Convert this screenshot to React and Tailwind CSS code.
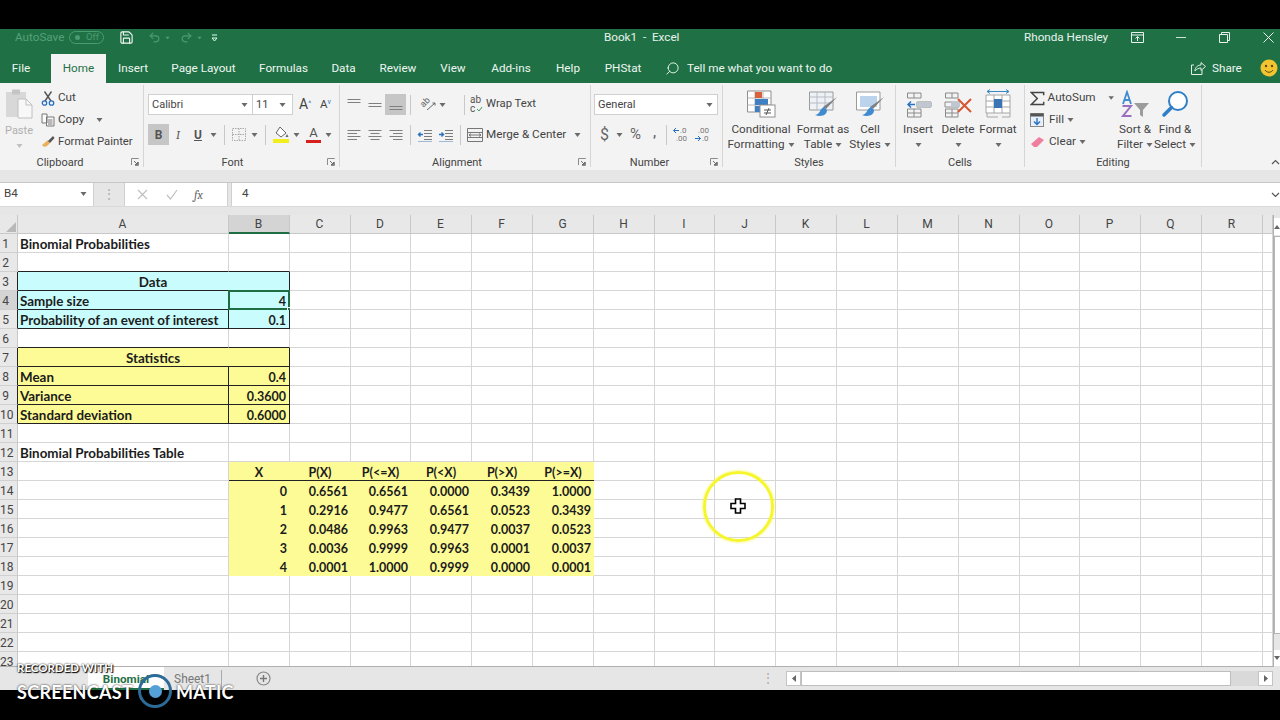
import React from "react";
import { Search, Save, Undo2, Redo2 } from "lucide-react";

const Caret = ({ c = "#6a6a6a", className = "" }) => (
  <svg width="7" height="4" viewBox="0 0 7 4" className={className}><path d="M0.5 0H6.5L3.5 4Z" fill={c} /></svg>
);
const Launcher = () => (
  <svg width="8" height="8" viewBox="0 0 8 8" className="absolute right-[4px] bottom-[4px]">
    <path d="M0.5 7V0.5H7.5V1M7.5 4V7.5H4" fill="none" stroke="#8c8c8c" /><path d="M3 3L6.5 6.5M6.5 4V6.5H4" fill="none" stroke="#6f6f6f" />
  </svg>
);
const Group = ({ w, label, children, lx, lp = "" }) => (
  <div className={`relative flex flex-col h-full shrink-0 ${w}`}>
    <div className="flex-1 min-h-0 flex">{children}</div>
    <div className={`h-[16px] pt-[1px] text-center text-[11px] leading-[15px] text-[#444] ${lp}`}>{label}</div>
    {lx && <Launcher />}
  </div>
);
const Sep = () => <div className="w-px h-[82px] mt-[2px] bg-[#d5d5d5] shrink-0" />;
const VSep = ({ ml = "ml-0", mr = "mr-0" }) => <div className={`w-px h-[20px] bg-[#c8c8c8] shrink-0 ${ml} ${mr}`} />;
const Lines = ({ rows }) => (
  <svg width="16" height="14" viewBox="0 0 16 14">
    {rows.map((r, i) => <path key={i} d={`M${r[0]} ${r[2]}H${r[1]}`} stroke="#7f7f7f" strokeWidth="1" />)}
  </svg>
);
const AlignT = ({ y }) => <Lines rows={[[1.5, 14.5, y], [1.5, 14.5, y + 3]]} />;
const AlignH = ({ k }) => {
  const short = k === "l" ? [1.5, 11] : k === "c" ? [3.5, 12.5] : [5, 14.5];
  return <Lines rows={[[1.5, 14.5, 2.5], short.concat(5.5), [1.5, 14.5, 8.5], short.concat(11.5)]} />;
};
const Indent = ({ flip }) => (
  <svg width="16" height="14" viewBox="0 0 16 14">
    <path d="M7 2.5H15M7 5.5H15M7 8.5H15M7 11.5H15" stroke="#7a7a7a" />
    <path d="M1 13.5H15" stroke="#9fb8d4" />
    <path d={flip ? "M1 6.5H5M3.5 4.5L5.5 6.5L3.5 8.5" : "M1.5 6.5H6M3.5 4.5L1.5 6.5L3.5 8.5"} stroke="#2a71c0" strokeWidth="1.4" fill="none" />
  </svg>
);
const Big = ({ w, l1, l2, caret, children }) => (
  <div className={`flex flex-col items-center shrink-0 ${w}`}>
    <div className="h-[39px] flex items-center justify-center pt-[3px]">{children}</div>
    <div className="text-[11.7px] leading-[15px] text-[#444] whitespace-nowrap h-[15px]">{l1}</div>
    <div className="text-[11.7px] leading-[15px] text-[#444] whitespace-nowrap h-[15px] flex items-center gap-[3px]">{l2}{caret && <Caret />}</div>
  </div>
);
const CondIcon = () => (
  <svg width="30" height="28" viewBox="0 0 30 28">
    <path d="M1.5 1H25V22H1.5Z" fill="#fff" stroke="#8f8f8f" />
    <path d="M1.5 8H25M1.5 15H25M9 1V22M17 1V22" stroke="#b5b5b5" />
    <rect x="9" y="2" width="7" height="6" fill="#d9633c" /><rect x="9" y="9" width="13" height="6" fill="#3f7fc4" /><rect x="9" y="16" width="5" height="6" fill="#3f7fc4" />
    <rect x="14" y="15" width="15" height="12" fill="#fff" stroke="#8f8f8f" />
    <path d="M18 20H25M18 23H25M23 18L20 25" stroke="#555" />
  </svg>
);
const TableIcon = ({ cell }) => (
  <svg width="30" height="28" viewBox="0 0 30 28">
    <path d="M1.5 2H25V20H1.5Z" fill={cell ? "#fff" : "#eef2f7"} stroke="#9a9a9a" />
    {!cell && <path d="M1.5 7H25M1.5 13H25M9 2V20M17 2V20" stroke="#b7bcc4" />}
    {cell && <rect x="5" y="6" width="17" height="11" fill="#bcd3ee" />}
    <path d="M29 7L18 19L15 17Z" fill="#7f7f7f" />
    <path d="M16 17C11 19 13 24 7 25C12 27 19 26 19 20Z" fill="#3f8ad0" />
  </svg>
);
const InsertIcon = () => (
  <svg width="27" height="28" viewBox="0 0 27 28">
    <path d="M2.5 3H16V8H2.5ZM9 3V8M2.5 19H16V27H2.5ZM9 19V27M2.5 23H16M12 12H26V17H12ZM19 12V17" fill="none" stroke="#8a8a8a" />
    <rect x="12" y="12" width="14" height="5" fill="#bfc7d2" />
    <path d="M10 14.5H3M6 11.5L3 14.5L6 17.5" fill="none" stroke="#2a71c0" strokeWidth="1.5" />
  </svg>
);
const DeleteIcon = () => (
  <svg width="30" height="28" viewBox="0 0 30 28">
    <path d="M2.5 3H15V8H2.5ZM9 3V8M2.5 19H15V27H2.5ZM9 19V27M2.5 23H15M2 12H16V17H2ZM9 12V17" fill="none" stroke="#8a8a8a" />
    <rect x="8" y="11" width="9" height="6" fill="#bfc7d2" />
    <path d="M15 9L28 22M28 9L15 22" stroke="#d65532" strokeWidth="2" />
  </svg>
);
const FormatIcon = () => (
  <svg width="28" height="30" viewBox="0 0 28 30">
    <path d="M2 6H26V24H2ZM10 6V24M18 6V24M2 12H26M2 18H26" fill="#fff" stroke="#a6a6a6" />
    <rect x="10" y="10" width="8" height="9" fill="#3a74b5" />
    <path d="M3 2.5H25M3 2.5L6 0.5M3 2.5L6 4.5M25 2.5L22 0.5M25 2.5L22 4.5" stroke="#3a8ac4" fill="none" />
    <path d="M3 24V28H14M18 28H26V24" stroke="#a6a6a6" fill="none" />
  </svg>
);
const SortIcon = () => (
  <svg width="30" height="28" viewBox="0 0 30 28">
    <path d="M14 13H29L23 20V27L20 25V20Z" fill="#9c9c9c" />
    <path d="M3 14L7 2L11 14M4.5 10H9.5" fill="none" stroke="#3f8ad0" strokeWidth="1.8" />
    <path d="M2.5 16H11L3 26H11.5" fill="none" stroke="#9b6fc0" strokeWidth="2" />
  </svg>
);
const FindIcon = () => (
  <svg width="28" height="28" viewBox="0 0 28 28">
    <circle cx="17" cy="11" r="9" fill="#fff" stroke="#2f7fc8" strokeWidth="2" />
    <path d="M10.5 17.5L3 25" stroke="#2f7fc8" strokeWidth="3.5" strokeLinecap="round" />
  </svg>
);

const cols = ["A", "B", "C", "D", "E", "F", "G", "H", "I", "J", "K", "L", "M", "N", "O", "P", "Q", "R", ""];
const gridCls = "grid grid-cols-[18px_211px_61px_61px_60px_61px_61px_61px_61px_60px_61px_61px_61px_61px_61px_60px_61px_61px_61px_10px]";
const probs = [
  ["0", "0.6561", "0.6561", "0.0000", "0.3439", "1.0000"],
  ["1", "0.2916", "0.9477", "0.6561", "0.0523", "0.3439"],
  ["2", "0.0486", "0.9963", "0.9477", "0.0037", "0.0523"],
  ["3", "0.0036", "0.9999", "0.9963", "0.0001", "0.0037"],
  ["4", "0.0001", "1.0000", "0.9999", "0.0000", "0.0001"],
];
const heads = ["X", "P(X)", "P(<=X)", "P(<X)", "P(>X)", "P(>=X)"];
const cyanRows = { 4: ["Sample size", "4"], 5: ["Probability of an event of interest", "0.1"] };
const yelRows = { 8: ["Mean", "0.4"], 9: ["Variance", "0.3600"], 10: ["Standard deviation", "0.6000"] };
const CC = "h-[19px] pl-[2px] pr-[3px] pt-[2px] leading-[17px] font-bold text-[#1c1c1c] whitespace-nowrap font-['Lato',sans-serif]";

function Row({ r }) {
  const boxed = (r >= 3 && r <= 5) || (r >= 7 && r <= 10);
  const head = (
    <div className={`h-[19px] pr-[6px] pt-[1px] text-center text-[12px] leading-[18px] text-[#444] border-b border-[#d0d0d0] border-r whitespace-nowrap ${boxed ? "border-r-[#222]" : "border-r-[#c8c8c8]"} ${r === 4 ? "bg-[#d4d4d4] text-[#1e6b41]" : "bg-[#e8e8e8]"}`}>{r}</div>
  );
  const cells = [];
  const merged = r === 3 || r === 7;
  for (let c = 1; c <= cols.length; c++) {
    if (merged && c === 2) continue;
    let cls = "border-r border-b border-[#d6d6d6] bg-white";
    let text = "";
    let align = "text-left";
    let span = "";
    let size = "text-[13.4px]";
    if (r === 1 && c === 1) text = "Binomial Probabilities";
    if (r === 12 && c === 1) text = "Binomial Probabilities Table";
    if ((r === 2 || r === 6) && c <= 2) cls = "border-r border-b border-[#d6d6d6] border-b-[#222] bg-white";
    if (r === 3 && c === 1) { cls = "border-r border-b border-[#222] bg-[#c9fcfc]"; text = "Data"; align = "text-center"; span = "col-span-2"; }
    if (r === 7 && c === 1) { cls = "border-r border-b border-[#222] bg-[#fdfb96]"; text = "Statistics"; align = "text-center"; span = "col-span-2"; }
    if (cyanRows[r] && c <= 2) { cls = "border-r border-b border-[#222] bg-[#c9fcfc]"; text = cyanRows[r][c - 1]; align = c === 1 ? "text-left" : "text-right"; if (c === 2) size = "text-[12.5px]"; }
    if (yelRows[r] && c <= 2) { cls = "border-r border-b border-[#222] bg-[#fdfb96]"; text = yelRows[r][c - 1]; align = c === 1 ? "text-left" : "text-right"; if (c === 2) size = "text-[12.5px]"; }
    if (r === 13 && c >= 2 && c <= 7) { cls = "border-b border-[#222] bg-[#fdfb96]"; text = heads[c - 2]; align = "text-center"; size = "text-[12.5px]"; }
    if (r >= 14 && r <= 18 && c >= 2 && c <= 7) { cls = "bg-[#fdfb96]"; text = probs[r - 14][c - 2]; align = "text-right"; size = "text-[12.5px]"; }
    cells.push(
      <div key={c} className={`relative ${CC} ${size} ${cls} ${align} ${span}`}>
        {text}
        {r === 4 && c === 2 && (
          <>
            <div className="absolute -left-[1px] -top-[1px] w-[62px] h-[20px] border-2 border-[#1f6e43]" />
            <div className="absolute -right-[3px] -bottom-[3px] w-[5px] h-[5px] bg-[#1f6e43] border border-white" />
          </>
        )}
      </div>
    );
  }
  return <>{head}{cells}</>;
}

export default function App() {
  const rows = [];
  for (let i = 1; i <= 23; i++) rows.push(<Row key={i} r={i} />);
  const tabs = [["Home", "w-[55px]"], ["Insert", "w-[54px]"], ["Page Layout", "w-[87px]"], ["Formulas", "w-[73px]"], ["Data", "w-[47px]"], ["Review", "w-[62px]"], ["View", "w-[48px]"], ["Add-ins", "w-[68px]"], ["Help", "w-[46px]"], ["PHStat", "w-[64px]"]];
  return (
    <div className="relative w-[1280px] h-[720px] overflow-hidden bg-black flex flex-col font-['Roboto',sans-serif] text-[11.7px]">
      <div className="h-[29px] shrink-0 bg-black" />
      {/* title bar */}
      <div className="h-[25px] pb-[8px] shrink-0 bg-[#1f7145] flex items-center text-[#e9f3ed] relative">
        <span className="ml-[15px] w-[50px] text-[#55a078]">AutoSave</span>
        <div className="ml-[4px] w-[35px] h-[13px] rounded-full border border-[#4d9a72] flex items-center text-[9.5px] text-[#4d9a72]">
          <span className="ml-[5px] w-[5px] h-[5px] rounded-full bg-[#4d9a72]" /><span className="ml-[6px]">Off</span>
        </div>
        <Save size={15} strokeWidth={1.8} className="ml-[15px] text-[#f1f6f3]" />
        <Undo2 size={13} className="ml-[14px] text-[#4d9a72]" />
        <Caret c="#4d9a72" className="ml-[3px] scale-75" />
        <Redo2 size={13} className="ml-[9px] text-[#4d9a72]" />
        <Caret c="#4d9a72" className="ml-[3px] scale-75" />
        <svg width="7" height="8" viewBox="0 0 7 8" className="ml-[8px]"><path d="M1 1H6M1 4H6L3.5 7L1 4" stroke="#dfe" fill="none" /></svg>
        <span className="absolute left-[604px] top-0 leading-[17px]">Book1&nbsp; -&nbsp; Excel</span>
        <span className="absolute left-[1024px] top-0 leading-[17px] whitespace-nowrap">Rhonda Hensley</span>
        <svg width="13" height="11" viewBox="0 0 13 11" className="absolute left-[1131px] top-[3px]"><path d="M.5 .5H12.5V10.5H.5ZM.5 3H12.5M6.5 9V5M4.5 6.5L6.5 4.5L8.5 6.5" fill="none" stroke="#e9f3ed" /></svg>
        <div className="absolute left-[1176px] top-[8px] w-[10px] h-px bg-[#cfe3d8]" />
        <svg width="11" height="11" viewBox="0 0 11 11" className="absolute left-[1219px] top-[3px]"><path d="M.5 2.5H8.5V10.5H.5ZM2.5 2.5V.5H10.5V8.5H8.5" fill="none" stroke="#e9f3ed" /></svg>
        <svg width="11" height="11" viewBox="0 0 11 11" className="absolute left-[1263px] top-[3px]"><path d="M.5 .5L10.5 10.5M10.5 .5L.5 10.5" stroke="#e9f3ed" /></svg>
      </div>
      {/* tab bar */}
      <div className="h-[29px] shrink-0 bg-[#1f7145] flex items-stretch text-[#eef6f1] relative">
        <div className="w-[42px] mr-[9px] flex items-center justify-center pt-[1px]">File</div>
        {tabs.map(([t, w]) => (
          <div key={t} className={`${w} flex items-center justify-center pt-[1px] whitespace-nowrap ${t === "Home" ? "bg-[#f3f3f3] text-[#1f7145]" : ""}`}>{t}</div>
        ))}
        <Search size={15} strokeWidth={1.5} className="ml-[10px] mt-[7px] -scale-x-100" />
        <span className="ml-[7px] self-center pt-[1px] whitespace-nowrap">Tell me what you want to do</span>
        <svg width="15" height="14" viewBox="0 0 15 14" className="absolute left-[1191px] top-[7px]"><path d="M3 4H.5V13.5H11V9M4 10C4 6 7 4 10 4V1.5L14.5 5.5L10 9.5V7C7.5 7 5.5 8 4 10Z" fill="none" stroke="#e4efe9" /></svg>
        <span className="absolute left-[1212px] top-[6px]">Share</span>
        <svg width="18" height="18" viewBox="0 0 18 18" className="absolute left-[1260px] top-[5px]"><circle cx="9" cy="9" r="8.5" fill="#f4c430" /><circle cx="6" cy="7" r="1.2" fill="#5a4a10" /><circle cx="12" cy="7" r="1.2" fill="#5a4a10" /><path d="M5 11C7 14 11 14 13 11" stroke="#5a4a10" fill="none" /></svg>
      </div>
      {/* ribbon */}
      <div className="h-[87px] shrink-0 bg-[#f3f3f3] flex text-[#444]">
        <Group w="w-[143px]" label="Clipboard" lx lp="pr-[23px]">
          <div className="w-[38px] flex flex-col items-center pt-[6px] text-[#b0b0b0]">
            <svg width="28" height="31" viewBox="0 0 28 31"><rect x="1" y="3" width="20" height="25" fill="#d8d8d8" /><rect x="7" y="0.5" width="8" height="5" fill="#c4c4c4" /><path d="M13 10H21L27 16V29H13Z" fill="#f8f8f8" stroke="#c0c0c0" /><path d="M21 10V16H27" fill="none" stroke="#c0c0c0" /></svg>
            <span className="leading-[15px] mt-[3px] text-[11px]">Paste</span>
            <Caret c="#c0c0c0" className="mt-[6px]" />
          </div>
          <div className="flex flex-col pl-[3px] pt-[4px]">
            <div className="h-[22px] flex items-center gap-[3px]"><svg width="14" height="15" viewBox="0 0 14 15"><path d="M3.5 0.5L10 10M10.5 0.5L4 10" stroke="#555" strokeWidth="1.4" /><circle cx="3.5" cy="12" r="2.2" fill="none" stroke="#2a71c0" strokeWidth="1.3" /><circle cx="10.5" cy="12" r="2.2" fill="none" stroke="#2a71c0" strokeWidth="1.3" /></svg>Cut</div>
            <div className="h-[22px] flex items-center gap-[3px]"><svg width="14" height="14" viewBox="0 0 14 14"><path d="M1 1H6V10H1ZM5.5 4H13V13H5.5ZM7 7H11.5M7 9H11.5M7 11H11.5" fill="#fafafa" stroke="#777" /></svg>Copy<Caret className="ml-[9px]" /></div>
            <div className="h-[22px] flex items-center gap-[3px]"><svg width="14" height="14" viewBox="0 0 14 14"><path d="M7 5L1 10C3 13 6 12 9 8Z" fill="#e8b15a" /><path d="M7 6L12 1L13.5 3L9 8Z" fill="#555" /></svg><span className="whitespace-nowrap text-[11.3px]">Format Painter</span></div>
          </div>
        </Group>
        <Sep />
        <Group w="w-[195px]" label="Font" lx lp="pr-[18px]">
          <div className="flex flex-col pl-[4px] pt-[11px]">
            <div className="flex items-center h-[21px]">
              <div className="w-[105px] h-[21px] pt-[1px] bg-white border border-[#d0d0d0] flex items-center justify-between px-[3px] text-[11px]">Calibri<Caret className="mr-[1px]" /></div>
              <div className="w-[40px] h-[21px] pt-[1px] bg-white border border-l-0 border-[#d0d0d0] flex items-center justify-between px-[3px] text-[11px]">11<Caret className="mr-[3px]" /></div>
              <span className="ml-[6px] text-[14px] w-[17px]">A<sup className="text-[#2a71c0] text-[7px]">^</sup></span>
              <span className="ml-[4px] text-[11.5px] w-[14px]">A<sup className="text-[#2a71c0] text-[7px]">v</sup></span>
            </div>
            <div className="flex items-center h-[21px] mt-[9px]">
              <div className="w-[21px] h-[21px] bg-[#c6c6c6] flex items-center justify-center font-bold text-[12px] text-[#555]">B</div>
              <span className="ml-[7px] w-[9px] italic font-serif text-[12px] text-[#555]">I</span>
              <span className="ml-[9px] w-[10px] underline text-[12px] font-bold text-[#555]">U</span>
              <Caret className="ml-[6px]" />
              <VSep ml="ml-[7px]" />
              <svg width="14" height="13" viewBox="0 0 14 13" className="ml-[7px]"><path d="M.5 .5H13.5V12.5H.5ZM7 .5V12.5M.5 6.5H13.5" fill="none" stroke="#a8a8a8" strokeDasharray="1.5 1" /></svg>
              <Caret className="ml-[5px]" />
              <VSep ml="ml-[7px]" />
              <svg width="16" height="18" viewBox="0 0 16 18" className="ml-[7px]"><path d="M7 1L13 7L8 11L3 7Z" fill="#fff" stroke="#666" /><path d="M14 8L15.5 11H12.5Z" fill="#666" /><rect x="0" y="13" width="16" height="4" fill="#f2ee1e" /></svg>
              <Caret className="ml-[4px]" />
              <div className="ml-[6px] w-[15px] flex flex-col items-center leading-[14px] text-[13px] text-[#555]">A<div className="w-[15px] h-[3px] bg-[#d81d1d]" /></div>
              <Caret className="ml-[4px]" />
            </div>
          </div>
        </Group>
        <Sep />
        <Group w="w-[250px]" label="Alignment" lx lp="pr-[16px]">
          <div className="flex flex-col pl-[3px] pt-[11px]">
            <div className="flex items-center h-[21px]">
              <div className="w-[21px] flex justify-center"><AlignT y={1.5} /></div>
              <div className="w-[21px] flex justify-center"><AlignT y={5.5} /></div>
              <div className="w-[21px] h-[21px] bg-[#c6c6c6] flex justify-center items-center"><AlignT y={8.5} /></div>
              <VSep ml="ml-[4px]" />
              <div className="ml-[9px] w-[17px] h-[15px] relative text-[#666]">
                <span className="absolute left-[0px] top-[0px] text-[9px] leading-[10px] -rotate-45">ab</span>
                <svg width="17" height="15" viewBox="0 0 17 15" className="absolute left-0 top-0"><path d="M7 13L15 6M12.5 6H15V8.5" stroke="#666" fill="none" /></svg>
              </div>
              <Caret className="ml-[2px]" />
              <VSep ml="ml-[18px]" />
              <div className="ml-[5px] w-[13px] h-[18px] relative text-[#555] text-[10px] leading-[8px]">
                <span className="absolute left-0 top-[0px]">ab</span>
                <span className="absolute left-0 top-[9px]">c</span>
                <svg width="7" height="6" viewBox="0 0 7 6" className="absolute left-[6px] top-[10px]"><path d="M1 3L3 5L6 1" stroke="#3f9a5f" fill="none" /></svg>
              </div>
              <span className="ml-[3px] whitespace-nowrap text-[11.3px]">Wrap Text</span>
            </div>
            <div className="flex items-center h-[21px] mt-[9px]">
              <div className="w-[21px] flex justify-center"><AlignH k="l" /></div>
              <div className="w-[21px] flex justify-center"><AlignH k="c" /></div>
              <div className="w-[21px] flex justify-center"><AlignH k="r" /></div>
              <VSep ml="ml-[4px]" />
              <div className="ml-[6px]"><Indent /></div>
              <div className="ml-[5px]"><Indent flip /></div>
              <VSep ml="ml-[6px]" />
              <svg width="16" height="14" viewBox="0 0 16 14" className="ml-[6px]"><path d="M.5 .5H15.5V13.5H.5ZM.5 4.5H15.5M.5 9.5H15.5M2 7H14M4 5.5L2 7L4 8.5M12 5.5L14 7L12 8.5" fill="none" stroke="#777" /></svg>
              <span className="ml-[3px] whitespace-nowrap">Merge &amp; Center</span>
              <Caret className="ml-[8px]" />
            </div>
          </div>
        </Group>
        <Sep />
        <Group w="w-[131px]" label="Number" lx lp="pr-[14px]">
          <div className="flex flex-col pl-[3px] pt-[11px]">
            <div className="w-[124px] h-[21px] pt-[1px] bg-white border border-[#d0d0d0] flex items-center justify-between px-[3px] text-[11px]">General<Caret className="mr-[1px]" /></div>
            <div className="flex items-center h-[21px] mt-[9px] text-[#666]">
              <span className="ml-[6px] w-[10px] text-[16px]">$</span>
              <Caret className="ml-[6px]" />
              <span className="ml-[7px] text-[15px] w-[13px]">%</span>
              <span className="ml-[10px] text-[13px] font-bold w-[6px] -mt-[4px]">,</span>
              <VSep ml="ml-[7px]" />
              <div className="ml-[5px] w-[16px] h-[15px] relative text-[8px] leading-[7px] text-[#777]">
                <svg width="8" height="7" viewBox="0 0 8 7" className="absolute left-0 top-0"><path d="M7 3.5H1.5M4 1L1.5 3.5L4 6" stroke="#2a71c0" fill="none" /></svg>
                <span className="absolute left-[8px] top-0">.0</span>
                <span className="absolute left-[4px] top-[8px]">.00</span>
              </div>
              <div className="ml-[6px] w-[16px] h-[15px] relative text-[8px] leading-[7px] text-[#777]">
                <span className="absolute left-[4px] top-0">.00</span>
                <svg width="8" height="7" viewBox="0 0 8 7" className="absolute left-0 top-[8px]"><path d="M1 3.5H6.5M4 1L6.5 3.5L4 6" stroke="#2a71c0" fill="none" /></svg>
                <span className="absolute left-[8px] top-[8px]">.0</span>
              </div>
            </div>
          </div>
        </Group>
        <Sep />
        <Group w="w-[172px]" label="Styles">
          <Big w="w-[72px] ml-[2px]" l1="Conditional" l2="Formatting" caret><CondIcon /></Big>
          <Big w="w-[50px] ml-[1px]" l1="Format as" l2="Table" caret><TableIcon /></Big>
          <Big w="w-[44px]" l1="Cell" l2="Styles" caret><TableIcon cell /></Big>
        </Group>
        <Sep />
        <Group w="w-[128px]" label="Cells">
          <Big w="w-[42px] ml-[1px]" l1="Insert" l2="" caret><InsertIcon /></Big>
          <Big w="w-[40px] -ml-[1px]" l1="Delete" l2="" caret><DeleteIcon /></Big>
          <Big w="w-[40px]" l1="Format" l2="" caret><FormatIcon /></Big>
        </Group>
        <Sep />
        <Group w="w-[176px]" label="Editing">
          <div className="flex flex-col pl-[5px] pt-[4px] w-[89px] shrink-0">
            <div className="h-[22px] flex items-center gap-[3px]"><svg width="16" height="15" viewBox="0 0 16 15"><path d="M15 4V1H1.5L8 7.5L1.5 14H15V11" fill="none" stroke="#444" strokeWidth="1.6" /></svg>AutoSum<Caret className="ml-[9px]" /></div>
            <div className="h-[22px] flex items-center gap-[3px]"><svg width="15" height="15" viewBox="0 0 15 15"><rect x=".5" y=".5" width="13" height="13" fill="#e6f0fa" stroke="#888" /><rect x=".5" y=".5" width="13" height="3" fill="#555" /><path d="M7 5V11M4 8.5L7 11.5L10 8.5" stroke="#2a71c0" fill="none" strokeWidth="1.4" /></svg><span className="ml-[1px]">Fill</span><Caret /></div>
            <div className="h-[22px] flex items-center gap-[3px]"><svg width="15" height="13" viewBox="0 0 15 13"><path d="M1 8L9 1L14 4L7 11H4Z" fill="#ef7f9e" /></svg><span className="ml-[1px]">Clear</span><Caret /></div>
          </div>
          <Big w="w-[42px]" l1="Sort &amp;" l2="Filter" caret><SortIcon /></Big>
          <Big w="w-[38px]" l1="Find &amp;" l2="Select" caret><FindIcon /></Big>
        </Group>
        <Sep />
        <div className="flex-1 relative">
          <svg width="9" height="6" viewBox="0 0 9 6" className="absolute right-0 bottom-[5px]"><path d="M1 5L4.5 1.5L8 5" stroke="#555" fill="none" strokeWidth="1.2" /></svg>
        </div>
      </div>
      <div className="h-[12px] shrink-0 bg-[#e6e6e6]" />
      {/* formula bar */}
      <div className="h-[24px] shrink-0 bg-[#e6e6e6] flex text-[#444] border-t border-[#c6c6c6]">
        <div className="w-[94px] bg-white flex items-center justify-between pl-[4px] pr-[6px] pb-[1px] border-r border-[#d0d0d0]">B4<Caret /></div>
        <div className="w-[30px] flex items-center justify-center text-[#aaa]">⋮</div>
        <div className="w-[104px] bg-white flex items-center border-x border-[#d0d0d0] text-[#b5b5b5]">
          <svg width="11" height="11" viewBox="0 0 11 11" className="ml-[12px]"><path d="M1 1L10 10M10 1L1 10" stroke="#c0c0c0" strokeWidth="1.2" /></svg>
          <svg width="12" height="11" viewBox="0 0 12 11" className="ml-[18px]"><path d="M1 6L4.5 10L11 1" stroke="#c0c0c0" strokeWidth="1.2" fill="none" /></svg>
          <span className="ml-[16px] italic font-serif text-[#666] text-[12px]">fx</span>
        </div>
        <div className="flex-1 ml-[3px] bg-white flex items-center pl-[10px] pb-[1px] relative border-l border-[#d0d0d0]">4
          <svg width="9" height="6" viewBox="0 0 9 6" className="absolute right-0 top-[9px]"><path d="M1 1L4.5 4.5L8 1" stroke="#555" fill="none" strokeWidth="1.2" /></svg>
        </div>
      </div>
      <div className="h-[9px] shrink-0 bg-[#e6e6e6] border-t border-[#d9d9d9]" />
      {/* sheet */}
      <div className="h-[452px] shrink-0 flex bg-[#e6e6e6] overflow-hidden">
        <div className={`${gridCls} content-start w-[1273px] h-full bg-white overflow-hidden border-b border-[#b0b0b0]`}>
          <div className="h-[19px] bg-[#e8e8e8] border-b border-r border-[#c8c8c8] relative">
            <svg width="10" height="10" viewBox="0 0 10 10" className="absolute right-[1px] bottom-[1px]"><path d="M10 0V10H0Z" fill="#b9b9b9" /></svg>
          </div>
          {cols.map((c, i) => (
            <div key={i} className={`h-[19px] pr-[1px] pt-[1px] text-center text-[12px] leading-[17px] text-[#444] ${c === "B" ? "bg-[#d4d4d4] border-b-2 border-b-[#1f6e43] text-[#1e6b41] border-r border-r-[#c8c8c8]" : "bg-[#e8e8e8] border-b border-r border-[#c8c8c8]"}`}>{c}</div>
          ))}
          {rows}
        </div>
        {/* vertical scrollbar */}
        <div className="w-[7px] flex flex-col border-l border-[#b0b0b0]">
          <div className="h-[17px] mt-[3px] bg-white flex items-center justify-center"><svg width="6" height="4" viewBox="0 0 6 4"><path d="M0 4L3 0L6 4Z" fill="#666" /></svg></div>
          <div className="h-[398px] mt-[1px] bg-white border-y border-l border-[#b5b5b5]" />
          <div className="flex-1" />
          <div className="h-[16px] mb-[1px] bg-white flex items-center justify-center"><svg width="6" height="4" viewBox="0 0 6 4"><path d="M0 0L3 4L6 0Z" fill="#666" /></svg></div>
        </div>
      </div>
      {/* sheet tabs */}
      <div className="h-[23px] shrink-0 bg-[#e6e6e6] flex items-stretch text-[#777]">
        <div className="w-[88px]" />
        <div className="w-[76px] bg-white text-[#1f7145] font-bold text-center leading-[24px] border-b-2 border-[#1f7145]">Binomial</div>
        <div className="w-[58px] text-center leading-[18px] border-r border-[#aaa] my-[3px] h-[20px] text-[11.9px]">Sheet1</div>
        <div className="w-[49px] flex items-center justify-end">
          <svg width="15" height="15" viewBox="0 0 15 15"><circle cx="7.5" cy="7.5" r="6.5" fill="none" stroke="#888" strokeWidth="1.2" /><path d="M7.5 4V11M4 7.5H11" stroke="#777" strokeWidth="1.4" /></svg>
        </div>
        <div className="w-[515px] text-right pr-[12px] text-[#aaa] leading-[22px]">⋮</div>
        <div className="w-[15px] h-[15px] mt-[4px] bg-white border border-[#c4c4c4] flex items-center justify-center"><svg width="4" height="7" viewBox="0 0 4 7"><path d="M4 0V7L0 3.5Z" fill="#666" /></svg></div>
        <div className="w-[430px] h-[15px] mt-[4px] bg-white border border-[#bdbdbd]" />
        <div className="w-[27px] h-[15px] mt-[4px] bg-[#d9d9d9]" />
        <div className="w-[15px] h-[15px] mt-[4px] bg-white border border-[#c4c4c4] flex items-center justify-center"><svg width="4" height="7" viewBox="0 0 4 7"><path d="M0 0V7L4 3.5Z" fill="#666" /></svg></div>
      </div>
      <div className="flex-1 bg-black" />
      {/* click highlight + cursor */}
      <div className="absolute left-[703px] top-[471px] w-[71px] h-[71px] rounded-full border-[3px] border-[#f6f62e] shadow-[0_0_3px_#f6f62e]" />
      <svg width="16" height="16" viewBox="0 0 16 16" className="absolute left-[730px] top-[498px]"><path d="M5.5 1H10.5V5.5H15V10.5H10.5V15H5.5V10.5H1V5.5H5.5Z" fill="#fff" stroke="#000" strokeWidth="1.6" /></svg>
      {/* watermark */}
      <span className="absolute left-[17px] top-[661px] text-[11.5px] leading-[14px] font-bold text-white whitespace-nowrap font-['Lato',sans-serif] [text-shadow:0_0_2px_#000,1px_1px_1px_#000]">RECORDED WITH</span>
      <span className="absolute left-[17px] top-[682px] text-[18px] leading-[20px] font-bold tracking-[0.3px] text-white whitespace-nowrap font-['Lato',sans-serif] [text-shadow:0_0_2px_#000]">SCREENCAST</span>
      <div className="absolute left-[138px] top-[674px] w-[34px] h-[34px] rounded-full border-[3px] border-[#2c6a97] flex items-center justify-center">
        <div className="w-[13px] h-[13px] rounded-full bg-[#56a0d8]" />
      </div>
      <span className="absolute left-[176px] top-[682px] text-[18px] leading-[20px] font-bold tracking-[0.3px] text-white whitespace-nowrap font-['Lato',sans-serif] [text-shadow:0_0_2px_#000]">MATIC</span>
    </div>
  );
}
